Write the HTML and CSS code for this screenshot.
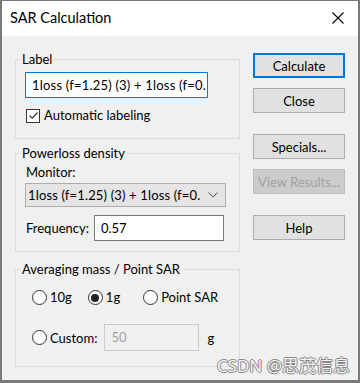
FILE: index.html
```html
<!DOCTYPE html>
<html lang="en">
<head>
  <meta charset="UTF-8">
  <title>SAR Calculation</title>
  <link rel="stylesheet" href="styles.css">
</head>
<body>

  <div class="window">
    <div class="titlebar">
      <span class="title">SAR Calculation</span>
      <svg class="close-x" width="12" height="12" viewBox="0 0 12 12">
        <path d="M0.5 0.5 L11.5 11.5 M11.5 0.5 L0.5 11.5" stroke="#000" stroke-width="1.1" fill="none"/>
      </svg>
    </div>

    <div class="content">
      <div class="left">

        <fieldset class="group group-label">
          <legend>Label</legend>
          <div class="textbox focused">1loss (f=1.25) (3) + 1loss (f=0.</div>
          <div class="check-row">
            <span class="checkbox">
              <svg width="11" height="11" viewBox="0 0 11 11">
                <path d="M1.5 5.5 L4.2 8.2 L9.5 2.5" stroke="#333" stroke-width="1.2" fill="none"/>
              </svg>
            </span>
            <span>Automatic labeling</span>
          </div>
        </fieldset>

        <fieldset class="group group-power">
          <legend>Powerloss density</legend>
          <div class="field-label">Monitor:</div>
          <div class="combo">
            <span>1loss (f=1.25) (3) + 1loss (f=0.</span>
            <svg width="10" height="6" viewBox="0 0 10 6">
              <path d="M0.5 0.5 L5 5 L9.5 0.5" stroke="#555" stroke-width="1" fill="none"/>
            </svg>
          </div>
          <div class="freq-row">
            <span>Frequency:</span>
            <div class="textbox freq">0.57</div>
          </div>
        </fieldset>

        <fieldset class="group group-mass">
          <legend>Averaging mass / Point SAR</legend>
          <div class="radio-row">
            <span class="radio-item r10"><span class="radio"></span>10g</span>
            <span class="radio-item r1"><span class="radio checked"></span>1g</span>
            <span class="radio-item"><span class="radio"></span>Point SAR</span>
          </div>
          <div class="custom-row">
            <span class="radio-item rc"><span class="radio"></span>Custom:</span>
            <div class="textbox disabled">50</div>
            <span class="unit">g</span>
          </div>
        </fieldset>

      </div>

      <div class="right">
        <button class="btn default">Calculate</button>
        <button class="btn">Close</button>
        <button class="btn spaced">Specials...</button>
        <button class="btn" disabled>View Results...</button>
        <button class="btn spaced">Help</button>
      </div>
    </div>

    <div class="watermark">CSDN @思茂信息</div>
  </div>

</body>
</html>
```

FILE: styles.css
```css
body {
  margin: 0;
  font-family: Lato, "Noto Sans", "Noto Sans CJK SC", sans-serif;
  font-size: 13px;
  color: #000;
}

.window {
  position: relative;
  width: 360px;
  height: 383px;
  box-sizing: border-box;
  background-color: #f0f0f0;
  border-style: solid;
  border-color: #7a7a7a;
  border-width: 1px 2px 3px 2px;
  overflow: hidden;
}

.titlebar {
  height: 35px;
  background-color: #fff;
  display: flex;
  align-items: center;
  justify-content: space-between;
  padding: 0 14px 0 8px;
}

.title {
  font-size: 14.5px;
  margin-top: -2px;
}

.close-x {
  margin-top: -1px;
}

.content {
  display: flex;
  padding: 15px 0 0 13px;
}

.left {
  width: 225px;
}

.group {
  margin: 0;
  padding: 0;
  border: 1px solid #dcdcdc;
  box-sizing: border-box;
  min-width: 0;
}

.group legend {
  margin-left: 4px;
  padding: 0 2px;
  line-height: 17px;
}

.group-label {
  height: 88px;
}

.group-power {
  height: 107px;
  margin-top: 6px;
}

.group-mass {
  height: 106px;
  margin-top: 9px;
}

.textbox {
  box-sizing: border-box;
  height: 26px;
  line-height: 24px;
  background-color: #fff;
  border: 1px solid #7a7a7a;
  padding: 0 6px;
  white-space: nowrap;
  overflow: hidden;
}

.textbox.focused {
  width: 183px;
  margin: 4px 0 0 9px;
  border-color: #0078d7;
  letter-spacing: 0.2px;
}

.check-row {
  display: flex;
  align-items: center;
  margin: 9px 0 0 10px;
  line-height: 17px;
}

.checkbox {
  box-sizing: border-box;
  width: 14px;
  height: 14px;
  border: 1px solid #333;
  background-color: #fff;
  display: flex;
  align-items: center;
  justify-content: center;
  margin-right: 4px;
}

.field-label {
  margin: 2px 0 0 10px;
  line-height: 17px;
}

.combo {
  box-sizing: border-box;
  width: 201px;
  height: 24px;
  margin: 2px 0 0 9px;
  background-color: #e5e5e5;
  border: 1px solid #adadad;
  display: flex;
  align-items: center;
  justify-content: space-between;
  padding: 0 7px 0 2px;
  white-space: nowrap;
  letter-spacing: 0.15px;
}

.freq-row {
  display: flex;
  align-items: center;
  margin: 8px 0 0 10px;
}

.textbox.freq {
  width: 130px;
  margin-left: 5px;
}

.radio-row,
.custom-row {
  display: flex;
  align-items: center;
  margin-left: 16px;
}

.radio-row {
  margin-top: 11px;
  line-height: 17px;
}

.custom-row {
  margin-top: 18px;
}

.radio-item {
  display: flex;
  align-items: center;
}

.radio {
  box-sizing: border-box;
  width: 15px;
  height: 15px;
  border: 1px solid #333;
  border-radius: 50%;
  background-color: #fff;
  margin-right: 3px;
  display: flex;
  align-items: center;
  justify-content: center;
}

.radio.checked::after {
  content: "";
  width: 8px;
  height: 8px;
  border-radius: 50%;
  background-color: #222;
}

.r10 {
  margin-right: 16px;
}

.r1 {
  margin-right: 23px;
}

.rc {
  margin-right: 7px;
}

.textbox.disabled {
  width: 95px;
  height: 27px;
  border-color: #ccc;
  background-color: #f0f0f0;
  color: #a0a0a0;
}

.unit {
  margin-left: 8px;
}

.right {
  display: flex;
  flex-direction: column;
  margin-left: 13px;
  padding-top: 2px;
}

.btn {
  box-sizing: border-box;
  width: 92px;
  height: 25px;
  margin-bottom: 10px;
  font-family: inherit;
  font-size: 13px;
  color: #000;
  background-color: #e1e1e1;
  border: 1px solid #adadad;
  padding: 0;
}

.btn.default {
  border: 2px solid #0078d7;
}

.btn.spaced {
  margin-top: 11px;
}

.btn:disabled {
  background-color: #cccccc;
  border-color: #bfbfbf;
  color: #a0a0a0;
}

.watermark {
  position: absolute;
  right: 8px;
  bottom: 3px;
  font-family: "Noto Sans", "Noto Sans CJK SC", sans-serif;
  font-size: 17px;
  color: #f4f4f4;
  text-shadow: 1px 0 0 #888, -1px 0 0 #888, 0 1px 0 #888, 0 -1px 0 #888;
}
```
